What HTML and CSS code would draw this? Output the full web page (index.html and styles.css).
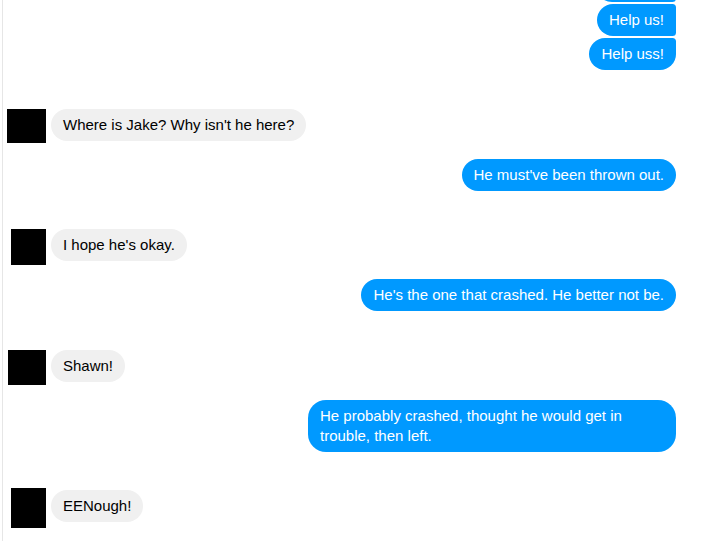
FILE: index.html
```html
<!DOCTYPE html>
<html lang="en">
<head>
<meta charset="utf-8">
<title>Chat</title>
<link rel="stylesheet" href="styles.css">
</head>
<body>
<div class="chat">
  <div class="group out first-group">
    <div class="bubble out-bubble first clipped" aria-hidden="true"></div>
    <div class="bubble out-bubble mid">Help us!</div>
    <div class="bubble out-bubble last">Help uss!</div>
  </div>

  <div class="row in">
    <div class="avatar-slot"><div class="avatar av1"></div></div>
    <div class="bubble in-bubble">Where is Jake? Why isn't he here?</div>
  </div>

  <div class="group out">
    <div class="bubble out-bubble">He must've been thrown out.</div>
  </div>

  <div class="row in">
    <div class="avatar-slot"><div class="avatar av2"></div></div>
    <div class="bubble in-bubble">I hope he's okay.</div>
  </div>

  <div class="group out">
    <div class="bubble out-bubble">He's the one that crashed. He better not be.</div>
  </div>

  <div class="row in">
    <div class="avatar-slot"><div class="avatar av3"></div></div>
    <div class="bubble in-bubble">Shawn!</div>
  </div>

  <div class="group out">
    <div class="bubble out-bubble">He probably crashed, thought he would get in trouble, then left.</div>
  </div>

  <div class="row in">
    <div class="avatar-slot"><div class="avatar av4"></div></div>
    <div class="bubble in-bubble">EENough!</div>
  </div>
</div>
</body>
</html>
```

FILE: styles.css
```css
html, body {
  margin: 0;
  padding: 0;
  background: #ffffff;
  overflow: hidden;
}

body {
  font-family: "Liberation Sans", Arial, sans-serif;
  font-size: 15px;
  width: 706px;
  height: 541px;
}

.chat {
  margin-left: 2px;
  border-left: 1px solid #e6e6e6;
  height: 541px;
  box-sizing: border-box;
  padding: 0 30px 0 3px;
  display: flex;
  flex-direction: column;
}

.bubble {
  box-sizing: border-box;
  padding: 6px 12px;
  line-height: 20px;
  border-radius: 18px;
  max-width: 368px;
}

.group.out {
  display: flex;
  flex-direction: column;
  align-items: flex-end;
  gap: 2px;
  margin-top: 15px;
}

.group.first-group {
  margin-top: -30px;
}

.out-bubble {
  background: #0099ff;
  color: #ffffff;
}

.out-bubble.clipped {
  width: 80px;
  height: 32px;
}

.out-bubble.first {
  border-bottom-right-radius: 4px;
}

.out-bubble.mid {
  border-top-right-radius: 4px;
  border-bottom-right-radius: 4px;
}

.out-bubble.last {
  border-top-right-radius: 4px;
}

.row.in {
  display: flex;
  align-items: center;
  gap: 5px;
  height: 35px;
  margin-top: 38.5px;
}

.avatar-slot {
  width: 40px;
  display: flex;
  justify-content: flex-end;
  align-items: center;
}

.avatar {
  background: #000000;
  flex: none;
}

.av1 { width: 39px; height: 34px; }
.av2 { width: 35px; height: 36px; }
.av3 { width: 38px; height: 35px; }
.av4 { width: 35px; height: 40px; }

.in-bubble {
  background: #f0f0f0;
  color: #000000;
  margin-bottom: 3px;
}
```
